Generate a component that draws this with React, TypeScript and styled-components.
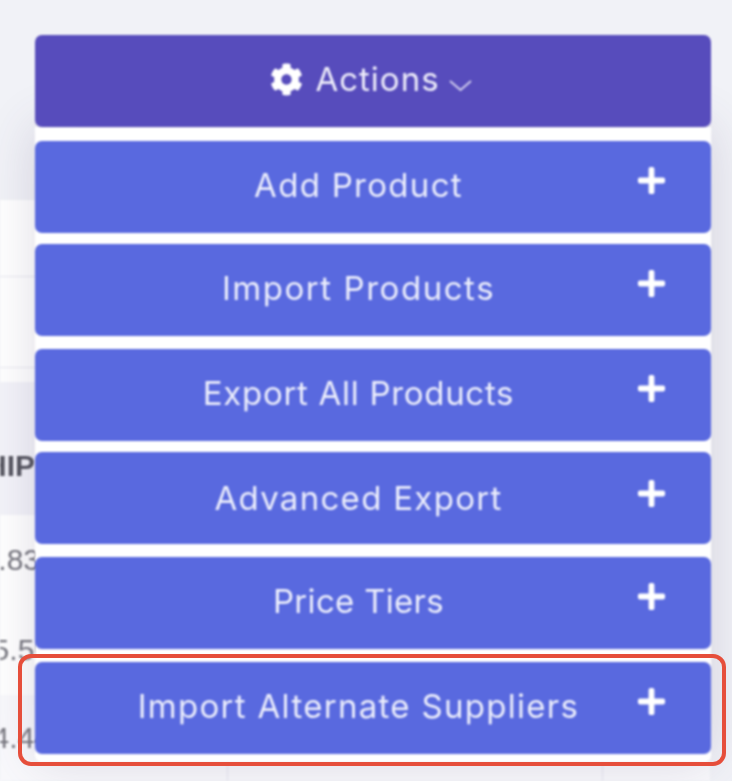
import { FaCog, FaPlus } from "react-icons/fa";
import styled, { createGlobalStyle } from "styled-components";

const GlobalStyle = createGlobalStyle`
  html, body {
    margin: 0;
    padding: 0;
    background: #f1f2f7;
  }
`;

const Page = styled.div`
  position: relative;
  width: 732px;
  height: 781px;
  overflow: hidden;
  background: #f1f2f7;
  font-family: Inter, "Liberation Sans", sans-serif;
`;

const Table = styled.div`
  display: flex;
  flex-direction: column;
  width: 710px;
  padding-top: 200px;
  filter: blur(0.8px);
`;

const Row = styled.div<{ $height: number; $bg?: string; $line?: boolean }>`
  display: grid;
  grid-template-columns: 54px 174px 375px 1fr;
  height: ${(p) => p.$height}px;
  box-sizing: border-box;
  background: ${(p) => p.$bg || "#fff"};
  border-bottom: ${(p) => (p.$line ? "1px solid #e9e9f1" : "none")};
`;

const Cell = styled.div<{ $ruled?: boolean; $inset?: number }>`
  display: flex;
  align-items: center;
  justify-content: flex-end;
  overflow: hidden;
  padding-right: ${(p) => p.$inset || 0}px;
  border-right: ${(p) => (p.$ruled ? "1px solid #e6e6f0" : "none")};
  font-family: "Liberation Sans", sans-serif;
  font-size: 30px;
  color: #77777f;
`;

const HeadCell = styled(Cell)`
  padding-top: 34px;
  font-weight: 700;
  color: #55555f;
`;

const Dropdown = styled.div`
  position: absolute;
  top: 35px;
  left: 35px;
  width: 676px;
  display: flex;
  flex-direction: column;
`;

const Toggle = styled.div`
  display: flex;
  align-items: center;
  justify-content: center;
  gap: 12px;
  height: 92px;
  padding: 0 4px 4px 0;
  box-sizing: border-box;
  border-radius: 7px;
  background: #574cbc;
  color: #eeedfa;
  font-size: 33px;
  letter-spacing: 1px;
  position: relative;
  z-index: 1;
  filter: blur(0.8px);

  svg {
    color: #fff;
    font-size: 33px;
  }
`;

const Chevron = styled.svg`
  width: 23px;
  height: 13px;
  margin: 12px 0 0 -3px;
  fill: none;
  stroke: #d5d2f0;
  stroke-width: 1.8;
`;

const Menu = styled.div`
  display: flex;
  flex-direction: column;
  padding: 14px 0 8px;
  background: #fff;
  border-radius: 0 0 7px 7px;
  box-shadow: 0 0 50px rgba(82, 63, 105, 0.19);
  filter: blur(0.8px);
`;

const Item = styled.div<{ $gap: number; $tracking: number; $dip: number }>`
  display: flex;
  align-items: center;
  height: 92px;
  margin-top: ${(p) => p.$gap}px;
  padding: ${(p) => p.$dip}px 44px ${(p) => 4 - p.$dip}px 46px;
  box-sizing: border-box;
  border-radius: 7px;
  background: #5969df;
  color: #eceefc;
  font-size: 33px;
  letter-spacing: ${(p) => p.$tracking}px;
`;

const Label = styled.span`
  flex: 1;
  text-align: center;
`;

const Plus = styled(FaPlus)`
  align-self: flex-start;
  margin-top: 24px;
  color: #fff;
  font-size: 31px;
`;

// red marker drawn over the last menu entry
const Highlight = styled.div`
  position: absolute;
  top: 619px;
  left: -17px;
  right: -15px;
  height: 112px;
  box-sizing: border-box;
  border: 4px solid #e64e3b;
  border-radius: 13px;
`;

const items = [
  { label: "Add Product", gap: 0, tracking: 1.3, dip: 0 },
  { label: "Import Products", gap: 11, tracking: 1.55, dip: 0 },
  { label: "Export All Products", gap: 13, tracking: 0.7, dip: 0 },
  { label: "Advanced Export", gap: 11, tracking: 1.3, dip: 2 },
  { label: "Price Tiers", gap: 13, tracking: 0.3, dip: 0 },
  { label: "Import Alternate Suppliers", gap: 13, tracking: 1.3, dip: 0 },
];

export default function App() {
  return (
    <Page>
      <GlobalStyle />
      <Table>
        <Row $height={77} $line />
        <Row $height={91} $line />
        <Row $height={14} />
        <Row $height={133} $bg="#f3f3f9">
          <HeadCell $inset={19}>SHIP</HeadCell>
        </Row>
        <Row $height={90}>
          <Cell $inset={14}>1.83</Cell>
        </Row>
        <Row $height={90}>
          <Cell $inset={3}>5.50</Cell>
        </Row>
        <Row $height={86} $bg="#f9f9fc">
          <Cell $inset={3}>4.44</Cell>
          <Cell $ruled />
          <Cell $ruled />
        </Row>
      </Table>
      <Dropdown>
        <Toggle>
          <FaCog />
          <span>Actions</span>
          <Chevron viewBox="0 0 23 13">
            <path d="M1 2l10.5 9L22 2" />
          </Chevron>
        </Toggle>
        <Menu>
          {items.map((item) => (
            <Item key={item.label} $gap={item.gap} $tracking={item.tracking} $dip={item.dip}>
              <Label>{item.label}</Label>
              <Plus />
            </Item>
          ))}
        </Menu>
        <Highlight />
      </Dropdown>
    </Page>
  );
}
